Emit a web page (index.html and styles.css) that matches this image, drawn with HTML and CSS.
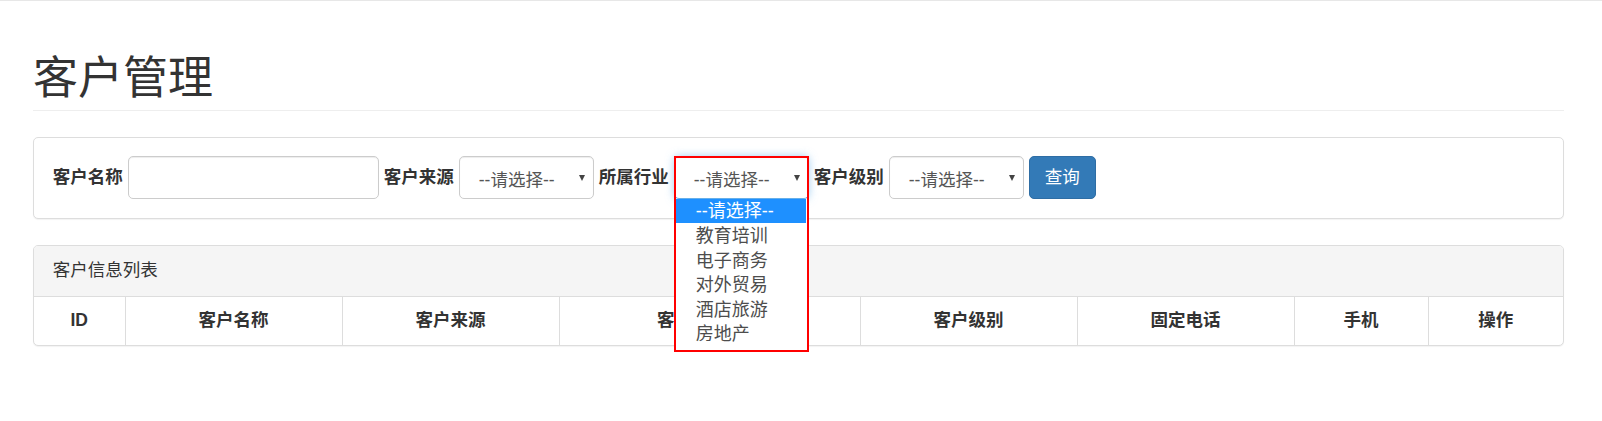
FILE: index.html
```html
<!DOCTYPE html>
<html lang="zh-CN">
<head>
<meta charset="utf-8">
<title>客户管理</title>
<link rel="stylesheet" href="styles.css">
</head>
<body>
<div class="page">
  <div class="page-header"><h1>客户管理</h1></div>

  <div class="panel search">
    <div class="panel-body">
      <form class="form-inline">
        <label>客户名称</label>
        <input class="form-control name-input" type="text">
        <label>客户来源</label>
        <div class="form-control select"><span class="val">--请选择--</span><span class="caret"></span></div>
        <label>所属行业</label>
        <div class="form-control select open">
          <span class="val">--请选择--</span><span class="caret"></span>
          <div class="dropdown">
            <div class="opt sel">--请选择--</div>
            <div class="opt">教育培训</div>
            <div class="opt">电子商务</div>
            <div class="opt">对外贸易</div>
            <div class="opt">酒店旅游</div>
            <div class="opt">房地产</div>
          </div>
          <div class="annot"></div>
        </div>
        <label>客户级别</label>
        <div class="form-control select"><span class="val">--请选择--</span><span class="caret"></span></div>
        <button class="btn" type="button">查询</button>
      </form>
    </div>
  </div>

  <div class="panel list">
    <div class="panel-heading">客户信息列表</div>
    <table class="grid">
      <colgroup>
        <col class="c-id"><col class="c-w"><col class="c-w"><col class="c-ind"><col class="c-w"><col class="c-w"><col class="c-s"><col>
      </colgroup>
      <thead>
        <tr>
          <th>ID</th><th>客户名称</th><th>客户来源</th><th><span class="under">客户所属行业</span></th><th>客户级别</th><th>固定电话</th><th>手机</th><th>操作</th>
        </tr>
      </thead>
    </table>
  </div>
</div>
</body>
</html>
```

FILE: styles.css
```css
html, body {
  background: #fff;
}
body {
  margin: 0;
  border-top: 1px solid #e7e7e7;
  font-family: "Liberation Sans", "Noto Sans CJK SC", sans-serif;
  font-size: 17.5px;
  line-height: 25px;
  color: #333;
}
.page {
  padding: 0 38px 0 33px;
}
.page-header {
  margin: 53px 0 26px;
  padding-bottom: 6px;
  border-bottom: 1px solid #eee;
}
.page-header h1 {
  margin: 0;
  font-size: 45px;
  line-height: 49.5px;
  font-weight: 400;
  color: #333;
}
.panel {
  border: 1px solid #ddd;
  border-radius: 5px;
  box-shadow: 0 1px 1px rgba(0, 0, 0, .05);
  background: #fff;
  margin-bottom: 26px;
}
.search {
  position: relative;
  z-index: 2;
}
.search .panel-body {
  padding: 18.75px;
}
.form-inline {
  display: flex;
  align-items: center;
  gap: 5px;
  margin: 0;
}
.form-inline label {
  font-weight: 700;
  white-space: nowrap;
  color: #333;
}
.form-control {
  box-sizing: border-box;
  height: 42.5px;
  border: 1px solid #ccc;
  border-radius: 5px;
  background: #fff;
  box-shadow: inset 0 1px 1px rgba(0, 0, 0, .075);
  font: inherit;
  color: #555;
}
.name-input {
  width: 251px;
  padding: 7.5px 15px;
  margin: 0;
}
.select {
  width: 135px;
  flex: none;
  display: flex;
  align-items: center;
  justify-content: space-between;
  padding: 5px 8px 0 19px;
  position: relative;
}
.select .val {
  white-space: nowrap;
}
.caret {
  width: 0;
  height: 0;
  border-left: 3.5px solid transparent;
  border-right: 3.5px solid transparent;
  border-top: 6px solid #444;
  margin-top: -5px;
}
.select.open {
  border-color: #66afe9;
  box-shadow: inset 0 1px 1px rgba(0, 0, 0, .075), 0 0 8px rgba(102, 175, 233, .6);
}
.dropdown {
  position: absolute;
  left: -1px;
  top: 41.5px;
  width: 135px;
  box-sizing: border-box;
  padding: 0 2.5px 4px;
  background: #fff;
  z-index: 2;
}
.opt {
  height: 24.5px;
  line-height: 27px;
  font-size: 18px;
  padding-left: 19.5px;
  color: #4d4d4d;
  white-space: nowrap;
  overflow: hidden;
}
.opt.sel {
  background: #1e90ff;
  color: #fff;
  line-height: 25px;
}
.annot {
  position: absolute;
  left: -1px;
  top: -1px;
  width: 135px;
  height: 196px;
  box-sizing: border-box;
  border: 2.5px solid #f00;
  z-index: 3;
  pointer-events: none;
}
.btn {
  box-sizing: border-box;
  height: 42.5px;
  padding: 0 15px;
  margin: 0;
  background: #337ab7;
  border: 1px solid #2e6da4;
  border-radius: 5px;
  color: #fff;
  font: inherit;
  font-size: 17.5px;
  white-space: nowrap;
}
.panel-heading {
  padding: 12.5px 18.75px;
  background: #f5f5f5;
  border-bottom: 1px solid #ddd;
  border-radius: 4px 4px 0 0;
  color: #333;
}
.grid {
  width: 100%;
  border-collapse: collapse;
  table-layout: fixed;
}
.c-id { width: 91px; }
.c-w { width: 217px; }
.c-ind { width: 301px; }
.c-s { width: 134px; }
.grid th {
  padding: 11px 10px 12px;
  line-height: 25px;
  font-weight: 700;
  text-align: center;
  color: #333;
  border-left: 1px solid #ddd;
  white-space: nowrap;
  overflow: hidden;
}
.grid th:first-child {
  border-left: 0;
}
```
